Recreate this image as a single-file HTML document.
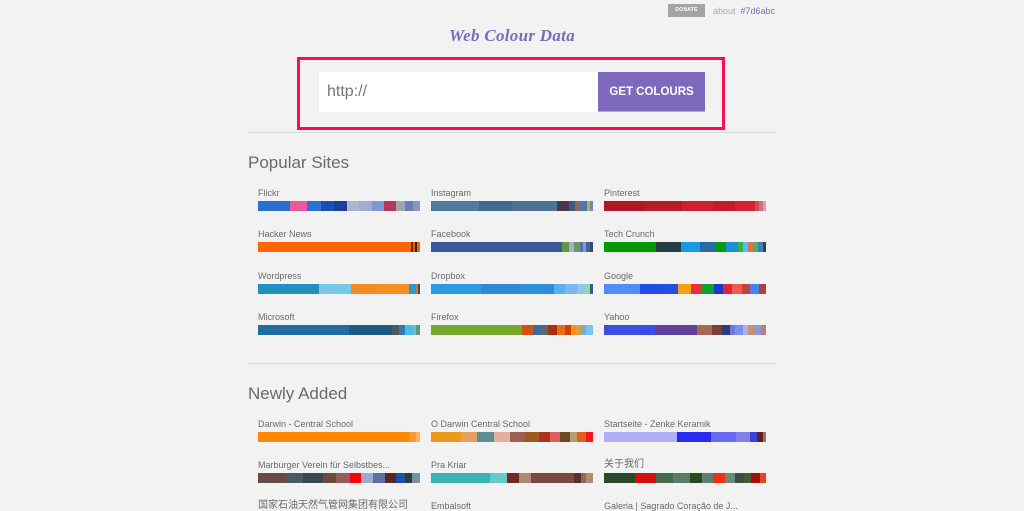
<!DOCTYPE html>
<html><head><meta charset="utf-8">
<style>
*{margin:0;padding:0;box-sizing:border-box}
body{width:1024px;height:510px;overflow:hidden;background:#f2f2f2;font-family:"Liberation Sans","Noto Sans CJK SC",sans-serif;color:#666;position:relative}
.top{position:absolute;top:4px;left:668px;display:flex;align-items:center}
.don{background:#a4a4a4;color:#fff;font-size:5px;font-weight:bold;width:37px;height:13px;line-height:13px;text-align:center;letter-spacing:.3px}
.ab{color:#aaa;margin-left:8px;font-size:9px}
.hx{color:#7d6abc;margin-left:5px;font-size:9px}
h1{position:absolute;top:26px;left:0;width:1024px;text-align:center;font-family:"Liberation Serif",serif;font-style:italic;font-weight:bold;color:#7d6abc;font-size:17px;letter-spacing:.3px}
.box{position:absolute;left:297px;top:57px;width:428px;height:73px;border:3px solid #ff0d4f}
.inp{position:absolute;left:319px;top:72px;width:279px;height:40px;background:#fff;font-size:16px;color:#777;padding:11px 0 0 8px}
.btn{position:absolute;left:598px;top:72px;width:107px;height:40px;background:#7d6abc;color:#fff;font-weight:bold;font-size:11.5px;text-align:center;line-height:40px;border-bottom:1px solid #b0a4d8}
.hr{position:absolute;left:248px;width:528px;height:1px;background:#ddd}
h2{position:absolute;left:248px;font-weight:normal;font-size:17px;color:#6a6a6a}
.it{position:absolute;width:162px}
.it .l{font-size:9px;color:#6a6a6a;height:10px;line-height:10px;white-space:nowrap}
.it .b{display:flex;height:10px;margin-top:3px}
.b span{display:block;height:100%}
</style></head><body>
<div class="top"><div class="don">DONATE</div><span class="ab">about</span><span class="hx">#7d6abc</span></div>
<h1>Web Colour Data</h1>
<div class="box"></div>
<div class="inp">http://</div>
<div class="btn">GET COLOURS</div>
<div class="hr" style="top:132px"></div>
<h2 style="top:153px">Popular Sites</h2>

<div class="it" style="left:258px;top:188px"><div class="l">Flickr</div><div class="b">
<span style="flex:95;background:#2f6fc9"></span><span style="flex:50;background:#e85a9a"></span><span style="flex:43;background:#2f6fd0"></span><span style="flex:37;background:#1a4fb0"></span><span style="flex:40;background:#1a3f94"></span><span style="flex:35;background:#b0b4cc"></span><span style="flex:40;background:#a0acd0"></span><span style="flex:35;background:#7b98d0"></span><span style="flex:35;background:#b03a5a"></span><span style="flex:27;background:#a0a4b0"></span><span style="flex:23;background:#6880b8"></span><span style="flex:22;background:#8898b8"></span></div></div>
<div class="it" style="left:431px;top:188px"><div class="l">Instagram</div><div class="b">
<span style="flex:140;background:#4f7a9f"></span><span style="flex:95;background:#3f6a90"></span><span style="flex:130;background:#4a7396"></span><span style="flex:35;background:#4a3850"></span><span style="flex:15;background:#3a5a80"></span><span style="flex:15;background:#8a6a60"></span><span style="flex:20;background:#4a7aaa"></span><span style="flex:8;background:#d0a060"></span><span style="flex:10;background:#6a8ab0"></span></div></div>
<div class="it" style="left:604px;top:188px"><div class="l">Pinterest</div><div class="b">
<span style="flex:120;background:#b01626"></span><span style="flex:110;background:#b81c2c"></span><span style="flex:90;background:#d01f2e"></span><span style="flex:65;background:#c41c2c"></span><span style="flex:60;background:#d42232"></span><span style="flex:12;background:#c05060"></span><span style="flex:10;background:#d07080"></span><span style="flex:10;background:#e0a0a8"></span></div></div>

<div class="it" style="left:258px;top:229px"><div class="l">Hacker News</div><div class="b">
<span style="flex:455;background:#ff6600"></span><span style="flex:5;background:#603010"></span><span style="flex:8;background:#e06000"></span><span style="flex:5;background:#402010"></span><span style="flex:9;background:#ff6600"></span></div></div>
<div class="it" style="left:431px;top:229px"><div class="l">Facebook</div><div class="b">
<span style="flex:390;background:#3b5998"></span><span style="flex:22;background:#5a9a4a"></span><span style="flex:14;background:#a0b0d0"></span><span style="flex:16;background:#6a9a5a"></span><span style="flex:10;background:#5a70a8"></span><span style="flex:10;background:#8a9ac8"></span><span style="flex:12;background:#4a6098"></span><span style="flex:8;background:#3a4a70"></span></div></div>
<div class="it" style="left:604px;top:229px"><div class="l">Tech Crunch</div><div class="b">
<span style="flex:155;background:#009a00"></span><span style="flex:72;background:#233f44"></span><span style="flex:58;background:#1a9ae0"></span><span style="flex:42;background:#2a6aa0"></span><span style="flex:33;background:#0a9a10"></span><span style="flex:35;background:#1a90d8"></span><span style="flex:17;background:#3ab040"></span><span style="flex:14;background:#50c0f0"></span><span style="flex:16;background:#e07050"></span><span style="flex:14;background:#50b060"></span><span style="flex:14;background:#3a80c0"></span><span style="flex:9;background:#2a4a48"></span></div></div>

<div class="it" style="left:258px;top:271px"><div class="l">Wordpress</div><div class="b">
<span style="flex:182;background:#2190c0"></span><span style="flex:95;background:#78c8e8"></span><span style="flex:75;background:#f48a24"></span><span style="flex:95;background:#fa8e26"></span><span style="flex:22;background:#2a98c8"></span><span style="flex:5;background:#e07020"></span><span style="flex:6;background:#2a5070"></span></div></div>
<div class="it" style="left:431px;top:271px"><div class="l">Dropbox</div><div class="b">
<span style="flex:150;background:#2d9ae5"></span><span style="flex:115;background:#3088d8"></span><span style="flex:100;background:#2c8fdc"></span><span style="flex:35;background:#58b0ee"></span><span style="flex:35;background:#78b8ec"></span><span style="flex:22;background:#8ac8f2"></span><span style="flex:15;background:#98d890"></span><span style="flex:10;background:#3a5a88"></span></div></div>
<div class="it" style="left:604px;top:271px"><div class="l">Google</div><div class="b">
<span style="flex:105;background:#4f8ef7"></span><span style="flex:70;background:#1e4fe8"></span><span style="flex:42;background:#2450e0"></span><span style="flex:38;background:#f8a014"></span><span style="flex:33;background:#e8303c"></span><span style="flex:35;background:#10a030"></span><span style="flex:28;background:#1838d0"></span><span style="flex:27;background:#d82838"></span><span style="flex:27;background:#f05a50"></span><span style="flex:25;background:#c8403a"></span><span style="flex:25;background:#4a80f0"></span><span style="flex:22;background:#b04040"></span></div></div>

<div class="it" style="left:258px;top:312px"><div class="l">Microsoft</div><div class="b">
<span style="flex:272;background:#1f6ea3"></span><span style="flex:128;background:#1b5b88"></span><span style="flex:20;background:#505a60"></span><span style="flex:18;background:#3a7aa8"></span><span style="flex:22;background:#40c0f0"></span><span style="flex:10;background:#8ab0c8"></span><span style="flex:12;background:#5a9a78"></span></div></div>
<div class="it" style="left:431px;top:312px"><div class="l">Firefox</div><div class="b">
<span style="flex:270;background:#76a82d"></span><span style="flex:33;background:#d85010"></span><span style="flex:25;background:#3a6aa0"></span><span style="flex:22;background:#5a6a70"></span><span style="flex:25;background:#a83010"></span><span style="flex:25;background:#e07018"></span><span style="flex:18;background:#c84010"></span><span style="flex:15;background:#f09020"></span><span style="flex:15;background:#e0a040"></span><span style="flex:15;background:#80a8d0"></span><span style="flex:20;background:#70c8f0"></span></div></div>
<div class="it" style="left:604px;top:312px"><div class="l">Yahoo</div><div class="b">
<span style="flex:145;background:#3b4ee0"></span><span style="flex:120;background:#6040a0"></span><span style="flex:43;background:#a86858"></span><span style="flex:27;background:#7a4038"></span><span style="flex:24;background:#303880"></span><span style="flex:15;background:#6a78e0"></span><span style="flex:22;background:#8090f0"></span><span style="flex:15;background:#a8b0f0"></span><span style="flex:20;background:#c89070"></span><span style="flex:15;background:#8898e0"></span><span style="flex:15;background:#b88070"></span></div></div>

<div class="hr" style="top:363px"></div>
<h2 style="top:384px">Newly Added</h2>

<div class="it" style="left:258px;top:419px"><div class="l">Darwin - Central School</div><div class="b">
<span style="flex:450;background:#ff8800"></span><span style="flex:20;background:#ff9a30"></span><span style="flex:12;background:#ffb060"></span></div></div>
<div class="it" style="left:431px;top:419px"><div class="l">O Darwin Central School</div><div class="b">
<span style="flex:88;background:#ec9a1a"></span><span style="flex:50;background:#e8a060"></span><span style="flex:50;background:#5a9090"></span><span style="flex:47;background:#e0b0a0"></span><span style="flex:45;background:#9a6050"></span><span style="flex:40;background:#a05a20"></span><span style="flex:35;background:#b03020"></span><span style="flex:28;background:#d86060"></span><span style="flex:30;background:#6a4a28"></span><span style="flex:22;background:#b0a070"></span><span style="flex:27;background:#e06020"></span><span style="flex:20;background:#f01818"></span></div></div>
<div class="it" style="left:604px;top:419px"><div class="l">Startseite - Zenke Keramik</div><div class="b">
<span style="flex:215;background:#b0b0f8"></span><span style="flex:100;background:#2a2af0"></span><span style="flex:75;background:#6a6af0"></span><span style="flex:40;background:#8080f0"></span><span style="flex:20;background:#4040e0"></span><span style="flex:20;background:#602020"></span><span style="flex:8;background:#a07070"></span></div></div>

<div class="it" style="left:258px;top:460px"><div class="l">Marburger Verein für Selbstbes...</div><div class="b">
<span style="flex:82;background:#6a4a48"></span><span style="flex:52;background:#4a5a60"></span><span style="flex:58;background:#384850"></span><span style="flex:38;background:#6a4a40"></span><span style="flex:40;background:#906060"></span><span style="flex:35;background:#ff0000"></span><span style="flex:35;background:#a0a8d0"></span><span style="flex:35;background:#5a70a0"></span><span style="flex:33;background:#582828"></span><span style="flex:25;background:#1a50b0"></span><span style="flex:20;background:#304030"></span><span style="flex:25;background:#7890a8"></span></div></div>
<div class="it" style="left:431px;top:460px"><div class="l">Pra Kriar</div><div class="b">
<span style="flex:175;background:#38b4b2"></span><span style="flex:50;background:#68c8c8"></span><span style="flex:35;background:#702828"></span><span style="flex:35;background:#b08870"></span><span style="flex:130;background:#7a4840"></span><span style="flex:20;background:#5a3030"></span><span style="flex:15;background:#906858"></span><span style="flex:20;background:#a89070"></span></div></div>
<div class="it" style="left:604px;top:460px"><div class="l" style="font-size:10px">关于我们</div><div class="b">
<span style="flex:90;background:#2a4a2a"></span><span style="flex:60;background:#d01010"></span><span style="flex:50;background:#4a6a50"></span><span style="flex:50;background:#5a7a6a"></span><span style="flex:35;background:#2a4a20"></span><span style="flex:30;background:#5a8070"></span><span style="flex:35;background:#f03018"></span><span style="flex:30;background:#6a8a78"></span><span style="flex:25;background:#3a5040"></span><span style="flex:22;background:#4a5a38"></span><span style="flex:25;background:#a01010"></span><span style="flex:18;background:#f04020"></span></div></div>

<div class="it" style="left:258px;top:501px"><div class="l" style="font-size:10px">国家石油天然气管网集团有限公司</div></div>
<div class="it" style="left:431px;top:501px"><div class="l">Embalsoft</div></div>
<div class="it" style="left:604px;top:501px"><div class="l">Galeria | Sagrado Coração de J...</div></div>
</body></html>
